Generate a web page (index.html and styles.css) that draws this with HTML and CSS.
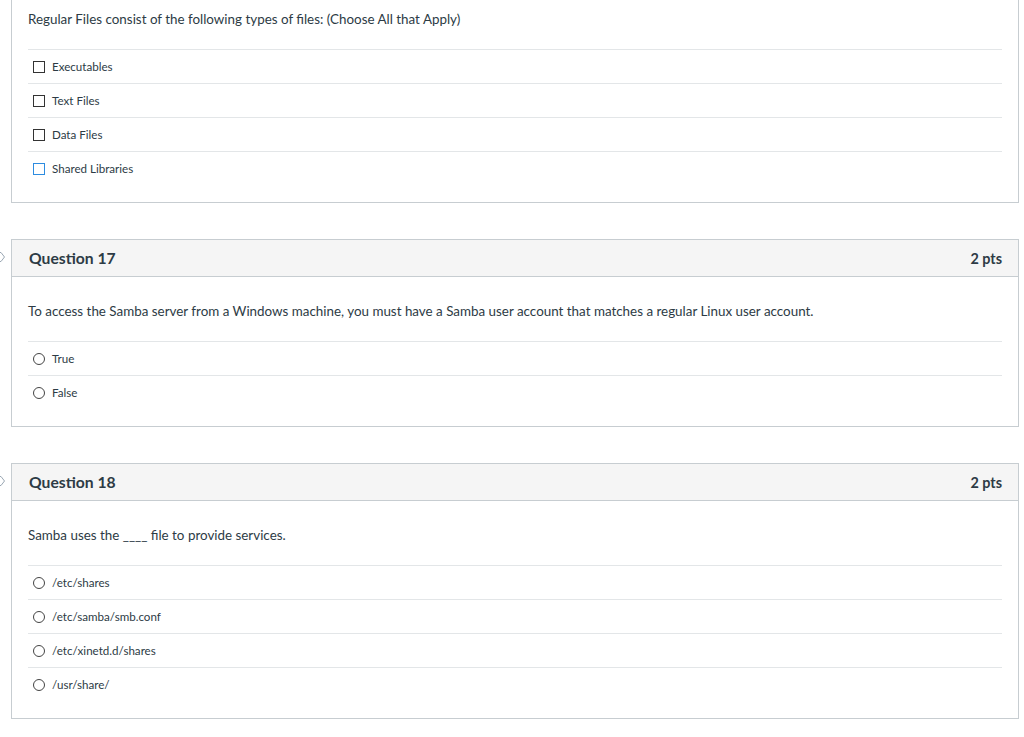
FILE: index.html
```html
<!DOCTYPE html>
<html lang="en">
<head>
    <meta charset="UTF-8">
    <title>Quiz</title>
    <link rel="stylesheet" href="styles.css">
</head>
<body>
    <div id="quiz">
        <div class="question-wrap">
            <div class="question">
                <div class="question-header">
                    <span class="question-title">Question 16</span>
                    <span class="question-pts">2 pts</span>
                </div>
                <div class="question-text">Regular Files consist of the following types of files: (Choose All that Apply)</div>
                <div class="answers">
                    <label class="answer"><span class="check"></span>Executables</label>
                    <label class="answer"><span class="check"></span>Text Files</label>
                    <label class="answer"><span class="check"></span>Data Files</label>
                    <label class="answer"><span class="check focused"></span>Shared Libraries</label>
                </div>
            </div>
        </div>

        <div class="question-wrap">
            <svg class="flag" width="6" height="12" viewBox="0 0 6 12"><path d="M-4 1.5 H1 L4.5 6 L1 10.5 H-4" fill="none" stroke="#9aa7b3" stroke-width="1"/></svg>
            <div class="question">
                <div class="question-header">
                    <span class="question-title">Question 17</span>
                    <span class="question-pts">2 pts</span>
                </div>
                <div class="question-text">To access the Samba server from a Windows machine, you must have a Samba user account that matches a regular Linux user account.</div>
                <div class="answers">
                    <label class="answer"><span class="radio"></span>True</label>
                    <label class="answer"><span class="radio"></span>False</label>
                </div>
            </div>
        </div>

        <div class="question-wrap">
            <svg class="flag" width="6" height="12" viewBox="0 0 6 12"><path d="M-4 1.5 H1 L4.5 6 L1 10.5 H-4" fill="none" stroke="#9aa7b3" stroke-width="1"/></svg>
            <div class="question">
                <div class="question-header">
                    <span class="question-title">Question 18</span>
                    <span class="question-pts">2 pts</span>
                </div>
                <div class="question-text">Samba uses the ____ file to provide services.</div>
                <div class="answers">
                    <label class="answer"><span class="radio"></span>/etc/shares</label>
                    <label class="answer"><span class="radio"></span>/etc/samba/smb.conf</label>
                    <label class="answer"><span class="radio"></span>/etc/xinetd.d/shares</label>
                    <label class="answer"><span class="radio"></span>/usr/share/</label>
                </div>
            </div>
        </div>
    </div>
</body>
</html>
```

FILE: styles.css
```css
body {
    font-family: 'Lato', 'Liberation Sans', sans-serif;
    background-color: #fff;
    color: #2d3b45;
    margin: 0;
    padding: 0;
}
#quiz {
    margin-top: -53px;
    padding: 0 5px 0 11px;
}
.question-wrap {
    position: relative;
    margin-bottom: 36px;
}
.flag {
    position: absolute;
    left: -11px;
    top: 12px;
}
.question {
    border: 1px solid #c7cdd1;
    background: #fff;
    padding-bottom: 17px;
}
.question-header {
    display: flex;
    justify-content: space-between;
    align-items: center;
    height: 36px;
    padding: 0 16px 0 17px;
    background-color: #f5f5f5;
    border-bottom: 1px solid #c7cdd1;
}
.question-title {
    font-size: 15.7px;
    font-weight: bold;
}
.question-pts {
    font-size: 14.4px;
    font-weight: bold;
}
.question-text {
    font-size: 13.4px;
    line-height: 18px;
    padding: 25px 16px 0;
    margin-bottom: 21px;
}
.answers {
    margin: 0 16px;
}
.answer {
    display: flex;
    align-items: center;
    box-sizing: border-box;
    height: 34px;
    border-top: 1px solid #e3e6e8;
    font-size: 11.6px;
    padding-left: 5px;
}
.check {
    width: 10px;
    height: 10px;
    border: 1px solid #333;
    margin-right: 7px;
}
.check.focused {
    border-color: #2d8ce0;
}
.radio {
    width: 10px;
    height: 10px;
    border: 1px solid #444;
    border-radius: 50%;
    margin-right: 7px;
}
```
